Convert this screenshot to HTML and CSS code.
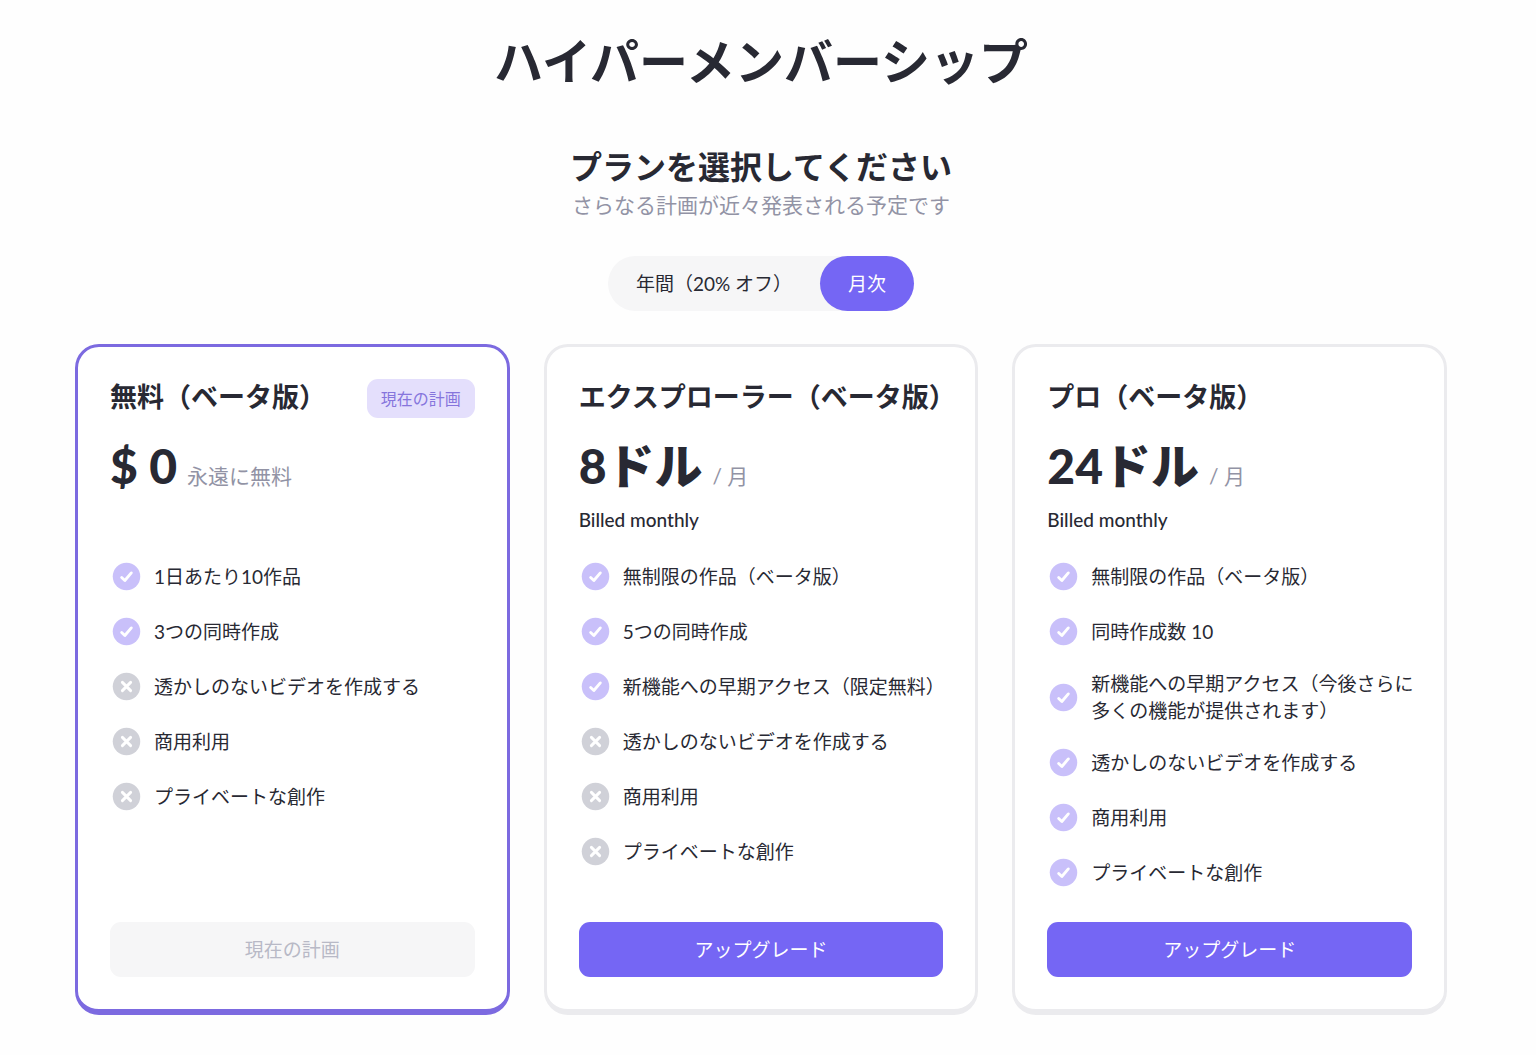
FILE: index.html
```html
<!DOCTYPE html>
<html lang="ja">
<head>
<meta charset="utf-8">
<title>ハイパーメンバーシップ</title>
<link rel="stylesheet" href="styles.css">
</head>
<body>
<svg class="sprite" aria-hidden="true">
  <symbol id="check" viewBox="0 0 24 24">
    <circle cx="12" cy="12" r="10" fill="#c9c0fa"/>
    <path d="M8.5 12.7l2.3 2.2 4.7-5.5" fill="none" stroke="#fff" stroke-width="2.1" stroke-linecap="round" stroke-linejoin="round"/>
  </symbol>
  <symbol id="cross" viewBox="0 0 24 24">
    <circle cx="12" cy="12" r="10" fill="#d0d1d8"/>
    <path d="M9 9l6 6M15 9l-6 6" fill="none" stroke="#fff" stroke-width="2.1" stroke-linecap="round"/>
  </symbol>
</svg>

<main class="page">
  <header class="intro">
    <h1>ハイパーメンバーシップ</h1>
    <h2>プランを選択してください</h2>
    <p class="subtitle">さらなる計画が近々発表される予定です</p>
    <div class="toggle">
      <button type="button" class="toggle-item" aria-pressed="false">年間（20% オフ）</button>
      <button type="button" class="toggle-item active" aria-pressed="true">月次</button>
    </div>
  </header>

  <div class="plans">
    <section class="plan current">
      <div class="plan-head">
        <h3>無料（ベータ版）</h3>
        <span class="badge">現在の計画</span>
      </div>
      <p class="price"><strong>$ 0</strong><span>永遠に無料</span></p>
      <p class="billed"></p>
      <ul class="features">
        <li><svg><use href="#check"/></svg><span>1日あたり10作品</span></li>
        <li><svg><use href="#check"/></svg><span>3つの同時作成</span></li>
        <li><svg><use href="#cross"/></svg><span>透かしのないビデオを作成する</span></li>
        <li><svg><use href="#cross"/></svg><span>商用利用</span></li>
        <li><svg><use href="#cross"/></svg><span>プライベートな創作</span></li>
      </ul>
      <button type="button" class="btn" disabled>現在の計画</button>
    </section>

    <section class="plan">
      <div class="plan-head">
        <h3>エクスプローラー（ベータ版）</h3>
      </div>
      <p class="price"><strong>8ドル</strong><span>/ 月</span></p>
      <p class="billed">Billed monthly</p>
      <ul class="features">
        <li><svg><use href="#check"/></svg><span>無制限の作品（ベータ版）</span></li>
        <li><svg><use href="#check"/></svg><span>5つの同時作成</span></li>
        <li><svg><use href="#check"/></svg><span>新機能への早期アクセス（限定無料）</span></li>
        <li><svg><use href="#cross"/></svg><span>透かしのないビデオを作成する</span></li>
        <li><svg><use href="#cross"/></svg><span>商用利用</span></li>
        <li><svg><use href="#cross"/></svg><span>プライベートな創作</span></li>
      </ul>
      <button type="button" class="btn">アップグレード</button>
    </section>

    <section class="plan">
      <div class="plan-head">
        <h3>プロ（ベータ版）</h3>
      </div>
      <p class="price"><strong>24ドル</strong><span>/ 月</span></p>
      <p class="billed">Billed monthly</p>
      <ul class="features">
        <li><svg><use href="#check"/></svg><span>無制限の作品（ベータ版）</span></li>
        <li><svg><use href="#check"/></svg><span>同時作成数 10</span></li>
        <li><svg><use href="#check"/></svg><span>新機能への早期アクセス（今後さらに多くの機能が提供されます）</span></li>
        <li><svg><use href="#check"/></svg><span>透かしのないビデオを作成する</span></li>
        <li><svg><use href="#check"/></svg><span>商用利用</span></li>
        <li><svg><use href="#check"/></svg><span>プライベートな創作</span></li>
      </ul>
      <button type="button" class="btn">アップグレード</button>
    </section>
  </div>
</main>
</body>
</html>
```

FILE: styles.css
```css
* {
    box-sizing: border-box;
}
body {
    margin: 0;
    background: #fefefe;
    color: #282933;
    font-family: Lato, 'Noto Sans CJK JP', sans-serif;
    font-size: 19px;
    line-height: 27px;
}
h1, h2, h3, p, ul {
    margin: 0;
    padding: 0;
}
button {
    border: 0;
    font: inherit;
    cursor: pointer;
}
.sprite {
    display: none;
}
.page {
    padding: 29px 89px 40px 75px;
}

/* heading and billing switch */
.intro {
    display: flex;
    flex-direction: column;
    align-items: center;
    text-align: center;
}
h1 {
    font-size: 49px;
    line-height: 64px;
    margin-bottom: 52px;
}
h2 {
    font-size: 32px;
    line-height: 44px;
}
.subtitle {
    color: #9293a5;
    font-size: 21px;
    line-height: 32px;
    margin-bottom: 35px;
}
.toggle {
    display: flex;
    border-radius: 28px;
    background: #f6f6f7;
}
.toggle-item {
    height: 55px;
    padding: 0 28px;
    border-radius: 28px;
    background: none;
    color: #282933;
}
.toggle-item.active {
    background: #7566f4;
    color: #fff;
}

/* plan cards */
.plans {
    display: grid;
    grid-template-columns: repeat(3, minmax(0, 1fr));
    gap: 34px;
    margin-top: 33px;
}
.plan {
    display: flex;
    flex-direction: column;
    padding: 32px;
    border: 3px solid #ebebee;
    border-bottom-width: 6px;
    border-radius: 24px;
    background: #fff;
}
.plan.current {
    border-color: #7c6ae0;
}
.plan-head {
    display: flex;
    align-items: center;
    justify-content: space-between;
    height: 39px;
}
h3 {
    padding-bottom: 4px;
    font-size: 27px;
    line-height: 35px;
    white-space: nowrap;
}
.badge {
    padding: 6px 14px;
    border-radius: 11px;
    background: #e4dffc;
    color: #8675dc;
    font-size: 16px;
}
.price {
    display: flex;
    align-items: baseline;
    gap: 10px;
    margin-top: 16px;
    color: #9293a5;
    font-size: 21px;
    line-height: 32px;
}
.price strong {
    color: #282933;
    font-size: 48px;
    font-weight: 900;
    line-height: 64px;
}
.billed {
    min-height: 27px;
    margin: 8px 0 27px;
    font-weight: 500;
}
.features {
    display: flex;
    flex-direction: column;
    gap: 22px;
    margin: 0 -4px 33px 0;
    list-style: none;
}
.features li {
    display: flex;
    align-items: center;
    gap: 11px;
}
.features svg {
    flex: none;
    width: 33px;
    height: 33px;
}
.btn {
    height: 55px;
    margin-top: auto;
    border-radius: 11px;
    background: #7566f4;
    color: #fff;
}
.btn:disabled {
    background: #f6f6f7;
    color: #b8b9c6;
    cursor: default;
}
```
